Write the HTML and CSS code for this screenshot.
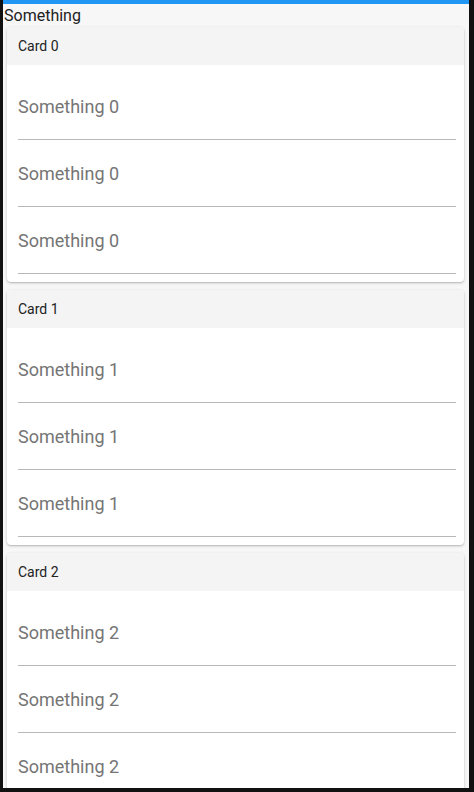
FILE: index.html
```html
<!DOCTYPE html>
<html lang="en">
<head>
  <meta charset="utf-8" />
  <meta name="viewport" content="width=device-width, initial-scale=1" />
  <title>Something</title>
  <link rel="stylesheet" href="styles.css">
</head>
<body>
  <div class="screen">
    <div class="statusbar"></div>
    <div class="page">
      <div class="title">Something</div>

      <section class="card">
        <div class="card-head">Card 0</div>
        <div class="card-body">
          <div class="field">Something 0</div>
          <div class="field">Something 0</div>
          <div class="field">Something 0</div>
        </div>
      </section>

      <section class="card">
        <div class="card-head">Card 1</div>
        <div class="card-body">
          <div class="field">Something 1</div>
          <div class="field">Something 1</div>
          <div class="field">Something 1</div>
        </div>
      </section>

      <section class="card">
        <div class="card-head">Card 2</div>
        <div class="card-body">
          <div class="field">Something 2</div>
          <div class="field">Something 2</div>
          <div class="field">Something 2</div>
        </div>
      </section>
    </div>
  </div>
</body>
</html>
```

FILE: styles.css
```css
:root{
  --frame:#111;
  --bg:#f7f7f7;
  --card:#fff;
  --head:#f4f4f4;
  --text:#222;
  --hint:#757575;
  --line:#b8b8b8;
  --blue:#2196f3;
}

* { box-sizing: border-box; }
html, body { height:100%; }

body{
  margin:0; background:var(--frame);
  font-family: Roboto, "Noto Sans", "Liberation Sans", Arial, sans-serif;
  overflow:hidden;
}

.screen{
  margin-left:3px; width:466px; height:788px;
  display:flex; flex-direction:column;
  background:var(--bg); overflow:hidden;
}
.statusbar{ flex:0 0 4px; background:var(--blue); }

.page{ flex:1 1 auto; display:flex; flex-direction:column; overflow:hidden; }
.title{ padding:2px 0 0 1px; height:19px; font-size:16px; line-height:19px; color:var(--text); }

.card{
  flex:0 0 auto; margin:4px 5px 4px 4px;
  background:var(--card); border-radius:4px;
  box-shadow: 0 1px 3px rgba(0,0,0,.22), 0 1px 1px rgba(0,0,0,.08);
  overflow:hidden;
}
.card-head{
  height:38px; padding-left:11px;
  display:flex; align-items:center;
  background:var(--head); color:var(--text); font-size:14px;
}
.card-body{ padding:8px 8px 8px 11px; }
.field{
  height:67px; padding-top:23px;
  border-bottom:1.5px solid var(--line);
  font-size:18px; line-height:22px; color:var(--hint);
}
```
